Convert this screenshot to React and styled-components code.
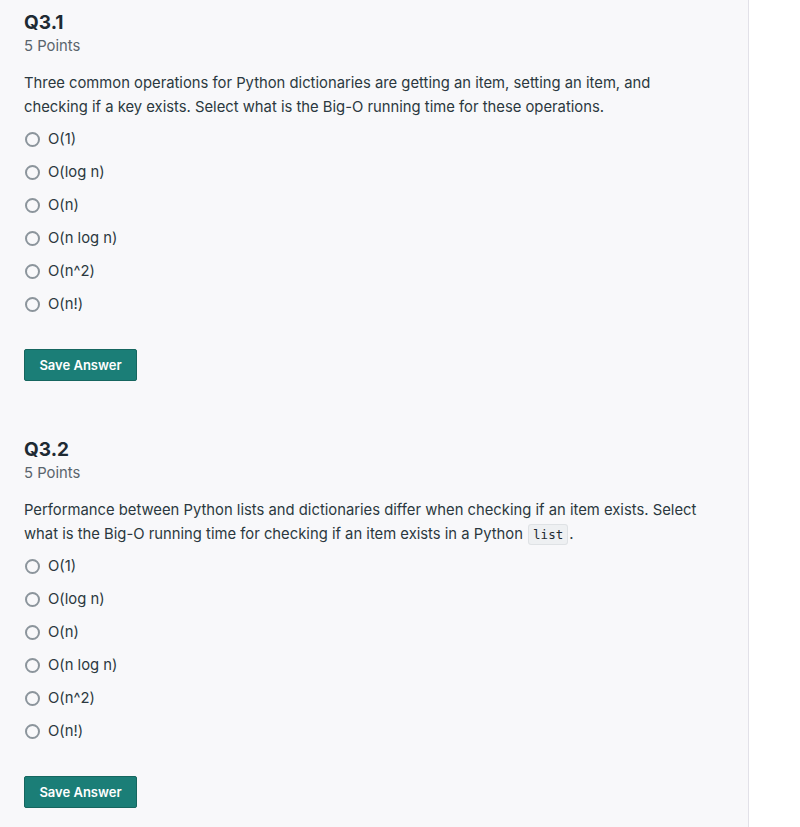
import React from "react";
import styled, { createGlobalStyle } from "styled-components";

const Global = createGlobalStyle`
  html, body { margin: 0; padding: 0; background: #ffffff; }
  body { font-family: "Inter", "Liberation Sans", sans-serif; }
`;

const Panel = styled.main`
  width: 749px;
  min-height: 827px;
  box-sizing: border-box;
  background: #f8f8fa;
  border-right: 1px solid #e2e1e8;
  padding: 11px 24px 20px;
`;

const Question = styled.section`
  display: flex;
  flex-direction: column;
  & + & { margin-top: 57px; }
`;

const Title = styled.h2`
  margin: 0;
  font-size: 19px;
  line-height: 24px;
  font-weight: 700;
  color: #1e2a33;
`;

const Points = styled.div`
  font-size: 14.8px;
  line-height: 22px;
  color: #5a646c;
`;

const Prompt = styled.p`
  margin: 14px 0 0;
  font-size: 14.8px;
  line-height: 24px;
  color: #2b3840;
  max-width: 688px;
`;

const Code = styled.code`
  font-family: "DejaVu Sans Mono", "Liberation Mono", monospace;
  font-size: 12.5px;
  line-height: 14px;
  background: #eef0f2;
  border: 1px solid #dfe2e5;
  border-radius: 3px;
  padding: 2px 4px;
  margin: 0 1px;
  color: #1e2a33;
`;

const Options = styled.div`
  display: flex;
  flex-direction: column;
  gap: 9px;
  margin-top: 8px;
`;

const Option = styled.label`
  display: flex;
  align-items: center;
  gap: 8px;
  font-size: 14.8px;
  line-height: 24px;
  color: #2b3840;
  cursor: pointer;
`;

const Radio = styled.span`
  width: 15px;
  height: 15px;
  box-sizing: border-box;
  border: 2px solid #8c959c;
  border-radius: 50%;
  margin-left: 1px;
  flex: none;
`;

const SaveButton = styled.button`
  align-self: flex-start;
  margin-top: 33px;
  height: 32px;
  width: 113px;
  padding: 0;
  background: #1b7e77;
  border: 1px solid #16665f;
  border-radius: 2px;
  color: #ffffff;
  font-family: inherit;
  font-size: 13px;
  font-weight: 600;
  cursor: pointer;
`;

const choices = ["O(1)", "O(log n)", "O(n)", "O(n log n)", "O(n^2)", "O(n!)"];

const questions = [
  {
    id: "Q3.1",
    prompt: (
      <>
        Three common operations for Python dictionaries are getting an item, setting an item, and
        checking if a key exists. Select what is the Big-O running time for these operations.
      </>
    ),
  },
  {
    id: "Q3.2",
    prompt: (
      <>
        Performance between Python lists and dictionaries differ when checking if an item exists. Select
        what is the Big-O running time for checking if an item exists in a Python <Code>list</Code>.
      </>
    ),
  },
];

export default function App() {
  return (
    <>
      <Global />
      <Panel>
        {questions.map((q) => (
          <Question key={q.id}>
            <Title>{q.id}</Title>
            <Points>5 Points</Points>
            <Prompt>{q.prompt}</Prompt>
            <Options>
              {choices.map((c) => (
                <Option key={c}>
                  <Radio />
                  {c}
                </Option>
              ))}
            </Options>
            <SaveButton>Save Answer</SaveButton>
          </Question>
        ))}
      </Panel>
    </>
  );
}
